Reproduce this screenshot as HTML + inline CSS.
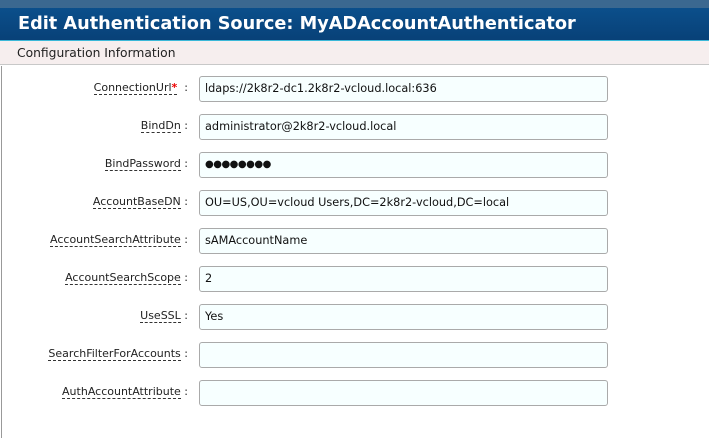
<!DOCTYPE html>
<html><head><style>
body{margin:0;width:709px;height:438px;overflow:hidden;background:#fff;font-family:"DejaVu Sans","Liberation Sans",sans-serif;position:relative}
.top{position:absolute;left:0;top:0;width:709px;height:8px;background:#3b6890}
.title{position:absolute;left:0;top:8px;width:709px;height:32px;background:linear-gradient(#0b4f8b,#084178);color:#fff;font-weight:bold;font-size:17.7px;line-height:32px;padding-left:18px;box-sizing:border-box}
.cyan{position:absolute;left:0;top:40px;width:709px;height:1px;background:#3bb8d8}
.conf{position:absolute;left:0;top:41px;width:709px;height:24px;background:#f6eeee;border-bottom:1px solid #c8c8c8;font-size:12.3px;line-height:24px;padding-left:17px;box-sizing:border-box;color:#222}
.lb{position:absolute;left:1px;top:66px;width:1px;height:372px;background:#999}
.row{position:absolute;left:0;width:709px;height:26px}
.lab{position:absolute;right:521px;top:5px;font-size:11px;color:#222;white-space:nowrap}
.lab span{border-bottom:1px dashed #333}
.lab b{color:#e00;font-weight:bold}
.in{position:absolute;left:199px;top:0;width:409px;height:26px;box-sizing:border-box;border:1px solid #aaa;border-radius:3px;background:#f7ffff;font-size:11.3px;line-height:24px;padding-left:5px;color:#111}
</style></head><body>
<div class="top"></div>
<div class="title">Edit Authentication Source: MyADAccountAuthenticator</div>
<div class="cyan"></div>
<div class="conf">Configuration Information</div>
<div class="lb"></div>

<div class="row" style="top:76px"><div class="lab"><span>ConnectionUrl<b>*</b></span> &nbsp;:</div><div class="in">ldaps://2k8r2-dc1.2k8r2-vcloud.local:636</div></div>
<div class="row" style="top:114px"><div class="lab"><span>BindDn</span> :</div><div class="in">administrator@2k8r2-vcloud.local</div></div>
<div class="row" style="top:152px"><div class="lab"><span>BindPassword</span> :</div><div class="in" style="font-size:10px;letter-spacing:-0.5px">●●●●●●●●</div></div>
<div class="row" style="top:190px"><div class="lab"><span>AccountBaseDN</span> :</div><div class="in">OU=US,OU=vcloud Users,DC=2k8r2-vcloud,DC=local</div></div>
<div class="row" style="top:228px"><div class="lab"><span>AccountSearchAttribute</span> :</div><div class="in">sAMAccountName</div></div>
<div class="row" style="top:266px"><div class="lab"><span>AccountSearchScope</span> :</div><div class="in">2</div></div>
<div class="row" style="top:304px"><div class="lab"><span>UseSSL</span> :</div><div class="in">Yes</div></div>
<div class="row" style="top:342px"><div class="lab"><span>SearchFilterForAccounts</span> :</div><div class="in"></div></div>
<div class="row" style="top:380px"><div class="lab"><span>AuthAccountAttribute</span> :</div><div class="in"></div></div>
</body></html>
